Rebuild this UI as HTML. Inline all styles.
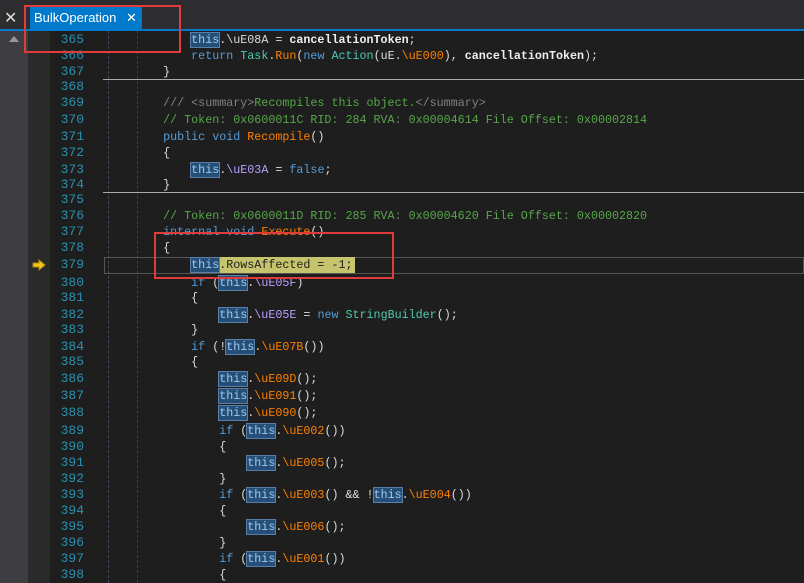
<!DOCTYPE html><html><head><style>
body{margin:0;width:804px;height:583px;background:#1e1e1e;overflow:hidden;position:relative;font-family:"Liberation Mono",monospace}
.abs{position:absolute}
.ln{position:absolute;left:48px;width:36px;text-align:right;color:#2b91af;font-size:13px;line-height:16px}
.c{position:absolute;left:107px;white-space:pre;color:#dcdcdc;font-size:11.7px;line-height:16px}
.k{color:#569cd6}.t{color:#4ec9b0}.m{color:#ff8000}.g{color:#57a64a}.p{color:#b8a0ff}.gr{color:#808080}.w{color:#eee;font-weight:bold}
.th{background:#264f78;outline:1px solid #5a7fa8;color:#9cc9f0}
</style></head><body>
<div class="abs" style="left:0;top:0;width:804px;height:30px;background:#2d2d30"></div>
<div class="abs" style="left:0;top:29px;width:804px;height:2px;background:#007acc"></div>
<div class="abs" style="left:4px;top:8px;color:#ddd;font:16px 'Liberation Sans',sans-serif">✕</div>
<div class="abs" style="left:30px;top:5px;width:112px;height:25px;background:#007acc;color:#fff;font:13px 'Liberation Sans',sans-serif;line-height:25px;padding-left:4px;box-sizing:border-box">BulkOperation <span style="margin-left:6px">✕</span></div>
<div class="abs" style="left:0;top:31px;width:28px;height:552px;background:#3e3e42"></div>
<div class="abs" style="left:9px;top:36px;width:0;height:0;border:5px solid transparent;border-bottom:6px solid #999;border-top:0"></div>
<div class="abs" style="left:28px;top:31px;width:22px;height:552px;background:#2a2a2a"></div>
<div class="abs" style="left:108px;top:31px;height:552px;border-left:1px dashed #3a4a5a"></div>
<div class="abs" style="left:137px;top:31px;height:552px;border-left:1px dashed #2e4a33"></div>
<div class="abs" style="left:103px;top:79px;width:701px;height:1px;background:#aaa"></div>
<div class="abs" style="left:103px;top:192px;width:701px;height:1px;background:#aaa"></div>
<div class="abs" style="left:104px;top:257px;width:698px;height:15px;border:1px solid #555"></div>
<div class="abs" style="left:219px;top:257px;width:136px;height:16px;background:#c6c46c"></div>
<svg class="abs" style="left:32px;top:259px" width="14" height="12" viewBox="0 0 14 12"><path d="M1 4H7V1L13 6L7 11V8H1Z" fill="#f5c518" stroke="#b08a10" stroke-width="1"/></svg>
<div class="ln" style="top:32px">365</div><div class="c" style="top:32px">            <span class="th">this</span>.\uE08A = <span class="w">cancellationToken</span>;</div>
<div class="ln" style="top:48px">366</div><div class="c" style="top:48px">            <span class="k">return</span> <span class="t">Task</span>.<span class="m">Run</span>(<span class="k">new</span> <span class="t">Action</span>(uE.<span class="m">\uE000</span>), <span class="w">cancellationToken</span>);</div>
<div class="ln" style="top:64px">367</div><div class="c" style="top:64px">        }</div>
<div class="ln" style="top:79px">368</div>
<div class="ln" style="top:95px">369</div><div class="c" style="top:95px">        <span class="gr">///</span> <span class="gr">&lt;summary&gt;</span><span class="g">Recompiles this object.</span><span class="gr">&lt;/summary&gt;</span></div>
<div class="ln" style="top:112px">370</div><div class="c g" style="top:112px">        // Token: 0x0600011C RID: 284 RVA: 0x00004614 File Offset: 0x00002814</div>
<div class="ln" style="top:129px">371</div><div class="c" style="top:129px">        <span class="k">public void</span> <span class="m">Recompile</span>()</div>
<div class="ln" style="top:145px">372</div><div class="c" style="top:145px">        {</div>
<div class="ln" style="top:162px">373</div><div class="c" style="top:162px">            <span class="th">this</span>.<span class="p">\uE03A</span> = <span class="k">false</span>;</div>
<div class="ln" style="top:177px">374</div><div class="c" style="top:177px">        }</div>
<div class="ln" style="top:192px">375</div>
<div class="ln" style="top:208px">376</div><div class="c g" style="top:208px">        // Token: 0x0600011D RID: 285 RVA: 0x00004620 File Offset: 0x00002820</div>
<div class="ln" style="top:224px">377</div><div class="c" style="top:224px">        <span class="k">internal void</span> <span class="m">Execute</span>()</div>
<div class="ln" style="top:240px">378</div><div class="c" style="top:240px">        {</div>
<div class="ln" style="top:257px">379</div><div class="c" style="top:257px">            <span class="th">this</span><span style="color:#1e1e1e">.RowsAffected = -1;</span></div>
<div class="ln" style="top:275px">380</div><div class="c" style="top:275px">            <span class="k">if</span> (<span class="th">this</span>.<span class="p">\uE05F</span>)</div>
<div class="ln" style="top:290px">381</div><div class="c" style="top:290px">            {</div>
<div class="ln" style="top:307px">382</div><div class="c" style="top:307px">                <span class="th">this</span>.<span class="p">\uE05E</span> = <span class="k">new</span> <span class="t">StringBuilder</span>();</div>
<div class="ln" style="top:322px">383</div><div class="c" style="top:322px">            }</div>
<div class="ln" style="top:339px">384</div><div class="c" style="top:339px">            <span class="k">if</span> (!<span class="th">this</span>.<span class="m">\uE07B</span>())</div>
<div class="ln" style="top:354px">385</div><div class="c" style="top:354px">            {</div>
<div class="ln" style="top:371px">386</div><div class="c" style="top:371px">                <span class="th">this</span>.<span class="m">\uE09D</span>();</div>
<div class="ln" style="top:388px">387</div><div class="c" style="top:388px">                <span class="th">this</span>.<span class="m">\uE091</span>();</div>
<div class="ln" style="top:405px">388</div><div class="c" style="top:405px">                <span class="th">this</span>.<span class="m">\uE090</span>();</div>
<div class="ln" style="top:423px">389</div><div class="c" style="top:423px">                <span class="k">if</span> (<span class="th">this</span>.<span class="m">\uE002</span>())</div>
<div class="ln" style="top:439px">390</div><div class="c" style="top:439px">                {</div>
<div class="ln" style="top:455px">391</div><div class="c" style="top:455px">                    <span class="th">this</span>.<span class="m">\uE005</span>();</div>
<div class="ln" style="top:471px">392</div><div class="c" style="top:471px">                }</div>
<div class="ln" style="top:487px">393</div><div class="c" style="top:487px">                <span class="k">if</span> (<span class="th">this</span>.<span class="m">\uE003</span>() &amp;&amp; !<span class="th">this</span>.<span class="m">\uE004</span>())</div>
<div class="ln" style="top:503px">394</div><div class="c" style="top:503px">                {</div>
<div class="ln" style="top:519px">395</div><div class="c" style="top:519px">                    <span class="th">this</span>.<span class="m">\uE006</span>();</div>
<div class="ln" style="top:535px">396</div><div class="c" style="top:535px">                }</div>
<div class="ln" style="top:551px">397</div><div class="c" style="top:551px">                <span class="k">if</span> (<span class="th">this</span>.<span class="m">\uE001</span>())</div>
<div class="ln" style="top:567px">398</div><div class="c" style="top:567px">                {</div>
<div class="abs" style="left:24px;top:5px;width:153px;height:44px;border:2px solid #e03c3c"></div>
<div class="abs" style="left:154px;top:232px;width:236px;height:43px;border:2px solid #e03c3c"></div>
</body></html>
